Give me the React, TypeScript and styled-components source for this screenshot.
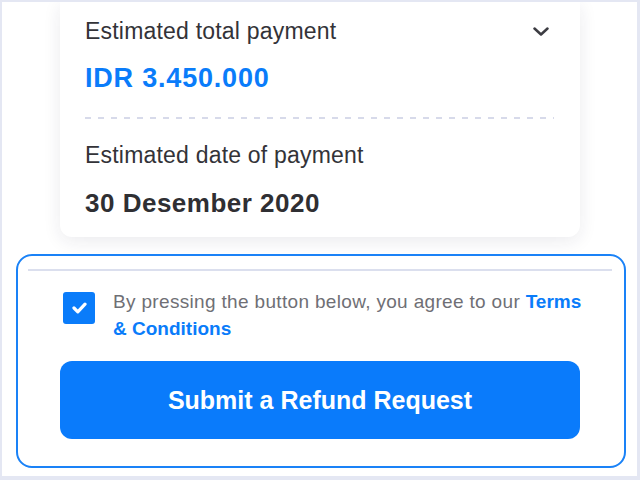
import React, { useState } from 'react';
import styled, { createGlobalStyle } from 'styled-components';

const GlobalStyle = createGlobalStyle`
	html, body {
		margin: 0;
		padding: 0;
		background: #e4e7f3;
	}
	body {
		font-family: 'Liberation Sans', Arial, sans-serif;
	}
`;

const Page = styled.div`
	width: 640px;
	height: 480px;
	background: #e4e7f3;
	padding: 2px 3px 4px 2px;
	box-sizing: border-box;
`;

const Panel = styled.div`
	height: 100%;
	background: #ffffff;
	overflow: hidden;
	display: flex;
	flex-direction: column;
`;

const SummaryCard = styled.div`
	width: 520px;
	margin: 0 auto 0 58px;
	box-sizing: border-box;
	padding: 15px 26px 19px 25px;
	background: #ffffff;
	border-radius: 0 0 12px 12px;
	box-shadow: 0 4px 18px rgba(30, 35, 70, 0.09);
	display: flex;
	flex-direction: column;
`;

const HeaderRow = styled.div`
	display: flex;
	align-items: center;
	justify-content: space-between;
`;

const Label = styled.div`
	font-size: 23px;
	line-height: 28px;
	letter-spacing: 0.2px;
	color: #333338;
`;

const Value = styled.div<{ $blue?: boolean }>`
	font-size: ${p => (p.$blue ? '27px' : '26px')};
	line-height: ${p => (p.$blue ? '32px' : '30px')};
	letter-spacing: ${p => (p.$blue ? '0.8px' : '0.5px')};
	font-weight: 700;
	color: ${p => (p.$blue ? '#0a7cfa' : '#2f2f33')};
	margin-top: ${p => (p.$blue ? '17px' : '19px')};
`;

const DashedLine = styled.div`
	height: 2px;
	margin: 23px 0 22px;
	background: repeating-linear-gradient(
		to right,
		#d7daea 0 6px,
		transparent 6px 13px
	);
`;

const Chevron = styled.svg`
	width: 16px;
	height: 9px;
	margin-right: 5px;
	flex-shrink: 0;
`;

const AgreementBox = styled.div`
	margin: 17px 11px 8px 14px;
	border: 2px solid #1a82f7;
	border-radius: 16px;
	padding: 13px 12px 27px 10px;
	display: flex;
	flex-direction: column;
`;

const Divider = styled.div`
	height: 2px;
	background: #dbdfee;
`;

const BoxContent = styled.div`
	padding: 0 32px;
	display: flex;
	flex-direction: column;
`;

const CheckRow = styled.label`
	display: flex;
	align-items: flex-start;
	gap: 18px;
	margin-top: 17px;
	padding-left: 3px;
	cursor: pointer;
`;

const CheckBox = styled.span<{ $checked: boolean }>`
	width: 32px;
	height: 32px;
	margin-top: 4px;
	border-radius: 3px;
	flex-shrink: 0;
	box-sizing: border-box;
	background: ${p => (p.$checked ? '#0a7cfa' : '#ffffff')};
	border: ${p => (p.$checked ? 'none' : '2px solid #b9bfd3')};
	display: flex;
	align-items: center;
	justify-content: center;
`;

const AgreeText = styled.span`
	font-size: 19px;
	line-height: 27px;
	letter-spacing: 0.33px;
	color: #6f6f75;
	white-space: nowrap;
`;

const TermsLink = styled.a`
	color: #0a7cfa;
	font-weight: 700;
	letter-spacing: 0;
	text-decoration: none;
`;

const SubmitButton = styled.button`
	margin-top: 19px;
	height: 78px;
	width: 100%;
	border: none;
	border-radius: 12px;
	background: #0a7bfb;
	color: #ffffff;
	font-family: 'Liberation Sans', Arial, sans-serif;
	font-size: 25px;
	font-weight: 700;
	cursor: pointer;
`;

const App: React.FC = () => {
	const [agreed, setAgreed] = useState(true);

	return (
		<Page>
			<GlobalStyle />
			<Panel>
				<SummaryCard>
					<HeaderRow>
						<Label>Estimated total payment</Label>
						<Chevron viewBox="0 0 16 9" fill="none">
							<polyline
								points="1.5,1.5 8,7.5 14.5,1.5"
								stroke="#3c3c42"
								strokeWidth="2.5"
								strokeLinecap="round"
								strokeLinejoin="round"
							/>
						</Chevron>
					</HeaderRow>
					<Value $blue>IDR 3.450.000</Value>
					<DashedLine />
					<Label>Estimated date of payment</Label>
					<Value>30 Desember 2020</Value>
				</SummaryCard>

				<AgreementBox>
					<Divider />
					<BoxContent>
						<CheckRow onClick={() => setAgreed(a => !a)}>
							<CheckBox $checked={agreed}>
								{agreed && (
									<svg width="15" height="12" viewBox="0 0 15 12" fill="none">
										<polyline
											points="2,6 5.8,9.8 13,2.2"
											stroke="#ffffff"
											strokeWidth="3.2"
											strokeLinecap="round"
											strokeLinejoin="round"
										/>
									</svg>
								)}
							</CheckBox>
							<AgreeText>
								By pressing the button below, you agree to our{' '}
								<TermsLink href="#">
									Terms
									<br />& Conditions
								</TermsLink>
							</AgreeText>
						</CheckRow>
						<SubmitButton type="button">Submit a Refund Request</SubmitButton>
					</BoxContent>
				</AgreementBox>
			</Panel>
		</Page>
	);
};

export default App;
